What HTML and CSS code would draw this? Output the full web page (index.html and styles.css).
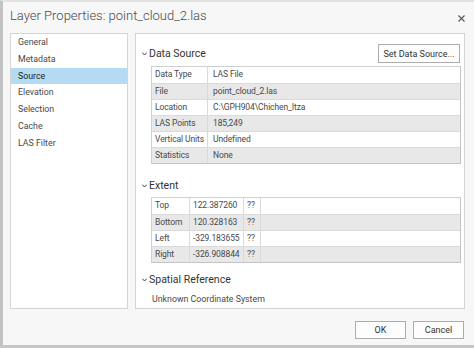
FILE: index.html
```html
<!DOCTYPE html>
<html>
<head>
<meta charset="utf-8">
<link rel="stylesheet" href="styles.css">
</head>
<body>
<div class="dialog">
  <div class="titlebar">
    <div class="title">Layer Properties: point_cloud_2.las</div>
    <svg class="close" width="7" height="7" viewBox="0 0 7 7"><path d="M0.5 0.5 L6.5 6.5 M6.5 0.5 L0.5 6.5" stroke="#555" stroke-width="1.1" fill="none"/></svg>
  </div>
  <div class="main">
    <ul class="nav">
      <li>General</li>
      <li>Metadata</li>
      <li class="active">Source</li>
      <li>Elevation</li>
      <li>Selection</li>
      <li>Cache</li>
      <li>LAS Filter</li>
    </ul>
    <div class="panel">
      <div class="sec-head">
        <div class="heading"><svg class="chev" width="5" height="4" viewBox="0 0 5 4"><path d="M0.3 0.6 L2.5 3 L4.7 0.6" stroke="#444" stroke-width="1" fill="none"/></svg>Data Source</div>
        <button class="btn btn-set">Set Data Source...</button>
      </div>
      <div class="grid ds">
        <div class="row"><div class="c">Data Type</div><div class="c">LAS File</div></div>
        <div class="row alt"><div class="c">File</div><div class="c">point_cloud_2.las</div></div>
        <div class="row"><div class="c">Location</div><div class="c">C:\GPH904\Chichen_Itza</div></div>
        <div class="row alt"><div class="c">LAS Points</div><div class="c">185,249</div></div>
        <div class="row"><div class="c">Vertical Units</div><div class="c">Undefined</div></div>
        <div class="row alt"><div class="c">Statistics</div><div class="c">None</div></div>
      </div>
      <div class="heading h-ext"><svg class="chev" width="5" height="4" viewBox="0 0 5 4"><path d="M0.3 0.6 L2.5 3 L4.7 0.6" stroke="#444" stroke-width="1" fill="none"/></svg>Extent</div>
      <div class="grid ext">
        <div class="row"><div class="c">Top</div><div class="c">122.387260</div><div class="c q">??</div><div class="c"></div></div>
        <div class="row alt"><div class="c">Bottom</div><div class="c">120.328163</div><div class="c q">??</div><div class="c"></div></div>
        <div class="row"><div class="c">Left</div><div class="c">-329.183655</div><div class="c q">??</div><div class="c"></div></div>
        <div class="row alt"><div class="c">Right</div><div class="c">-326.908844</div><div class="c q">??</div><div class="c"></div></div>
      </div>
      <div class="heading h-sr"><svg class="chev" width="5" height="4" viewBox="0 0 5 4"><path d="M0.3 0.6 L2.5 3 L4.7 0.6" stroke="#444" stroke-width="1" fill="none"/></svg>Spatial Reference</div>
      <div class="sr-text">Unknown Coordinate System</div>
    </div>
  </div>
  <div class="footer">
    <button class="btn btn-foot">OK</button>
    <button class="btn btn-foot">Cancel</button>
  </div>
</div>
</body>
</html>
```

FILE: styles.css
```css
html, body {
  margin: 0;
  padding: 0;
}
body {
  width: 474px;
  height: 348px;
  overflow: hidden;
  background: #c4c4c4;
  font-family: Roboto, "Open Sans", sans-serif;
  color: #3a3a3a;
}
.dialog {
  box-sizing: border-box;
  width: 474px;
  height: 348px;
  border-left: 3px solid #c3c3c3;
  border-top: 2px solid #e2e2e2;
  border-bottom: 3px solid #c6c6c6;
  background: #f7f7f7;
  display: flex;
  flex-direction: column;
}
.titlebar {
  height: 31px;
  box-sizing: border-box;
  padding: 4px 9px 0 7px;
  display: flex;
  justify-content: space-between;
  align-items: flex-start;
}
.title {
  font-size: 13px;
  font-weight: 300;
  line-height: 20px;
  color: #4a4a4a;
}
.close {
  margin-top: 9px;
}
.main {
  height: 276px;
  display: flex;
  gap: 7px;
  padding-left: 7px;
}
.nav {
  list-style: none;
  margin: 0;
  padding: 0;
  width: 118px;
  box-sizing: border-box;
  border: 1px solid #d4d4d4;
  background: #fff;
}
.nav li {
  height: 16.8px;
  line-height: 16.8px;
  padding-left: 7px;
  font-size: 8.8px;
  color: #484848;
}
.nav li.active {
  background: #b5dbf3;
  color: #222;
}
.panel {
  width: 330px;
  box-sizing: border-box;
  border: 1px solid #d4d4d4;
  background: #fff;
  padding: 10px 3px 0 15px;
  display: flex;
  flex-direction: column;
}
.sec-head {
  height: 19px;
  display: flex;
  justify-content: space-between;
  align-items: center;
}
.heading {
  margin-left: -9px;
  display: flex;
  align-items: center;
  gap: 2px;
  font-size: 10.5px;
  color: #333;
  height: 18px;
  line-height: 18px;
}
.chev {
  display: block;
}
.btn {
  box-sizing: border-box;
  border: 1px solid #acacac;
  background: #fdfdfd;
  font-family: Roboto, "Open Sans", sans-serif;
  font-size: 9px;
  color: #333;
  padding: 0;
  margin: 0;
}
.btn-set {
  width: 82px;
  height: 19px;
  margin-right: 1px;
}
.grid {
  border: 1px solid #cfcfcf;
  border-right-color: #c4c4c4;
  border-bottom-color: #c4c4c4;
  font-size: 8.5px;
  letter-spacing: -0.1px;
  color: #484848;
}
.ds {
  margin-top: 3px;
}
.row {
  display: grid;
  height: 16px;
  box-sizing: border-box;
}
.row + .row {
  border-top: 1px solid #dadada;
}
.ds .row {
  grid-template-columns: 55px 1fr;
}
.ext .row {
  grid-template-columns: 37px 54px 17px 1fr;
}
.row.alt {
  background: #e8e8e8;
}
.c {
  line-height: 15px;
  padding-left: 3px;
  white-space: nowrap;
  overflow: hidden;
  border-left: 1px solid #dadada;
}
.c:first-child {
  border-left: none;
}
.ds .c + .c {
  padding-left: 5px;
}
.h-ext {
  margin-top: 13px;
  margin-bottom: 2px;
}
.h-sr {
  margin-top: 8px;
}
.sr-text {
  margin-top: 2px;
  height: 16px;
  line-height: 16px;
  font-size: 8.8px;
  color: #484848;
  padding-left: 1px;
}
.footer {
  flex: 1;
  display: flex;
  justify-content: flex-end;
  gap: 7px;
  padding: 12px 10px 0 0;
}
.btn-foot {
  width: 51px;
  height: 18px;
}
```
